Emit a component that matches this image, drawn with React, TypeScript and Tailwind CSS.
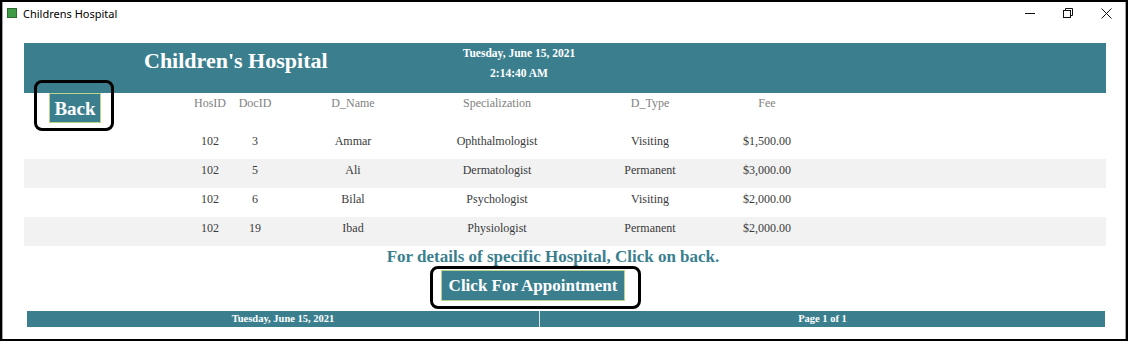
import React from "react";

const rows = [
  ["102", "3", "Ammar", "Ophthalmologist", "Visiting", "$1,500.00"],
  ["102", "5", "Ali", "Dermatologist", "Permanent", "$3,000.00"],
  ["102", "6", "Bilal", "Psychologist", "Visiting", "$2,000.00"],
  ["102", "19", "Ibad", "Physiologist", "Permanent", "$2,000.00"],
];

const widths = ["w-[48px]", "w-[42px]", "w-[154px]", "w-[134px]", "w-[172px]", "w-[62px]"];

export default function App() {
  return (
    <div className="w-[1128px] h-[341px] border-2 border-black bg-white relative overflow-hidden">
      <div className="h-full border-l border-r border-[#a3a3a3] font-['Liberation_Serif',serif]">
        {/* title bar */}
        <div className="h-[22px] flex items-center font-['Noto_Sans',sans-serif]">
          <div className="ml-[4px] w-[10px] h-[10px] bg-[#3f9a45] border border-[#2d6b31]" />
          <span className="ml-[6px] text-[11px] text-black leading-none">Childrens Hospital</span>
          <div className="ml-auto flex items-center h-full">
            <div className="w-[38px] flex justify-center">
              <svg width="10" height="10" viewBox="0 0 10 10"><line x1="0" y1="5.5" x2="10" y2="5.5" stroke="#111" strokeWidth="1" /></svg>
            </div>
            <div className="w-[38px] flex justify-center">
              <svg width="10" height="10" viewBox="0 0 10 10" fill="none" stroke="#111" strokeWidth="1">
                <rect x="0.5" y="2.5" width="7" height="7" />
                <path d="M2.5 2.5V0.5H9.5V7.5H7.5" />
              </svg>
            </div>
            <div className="w-[38px] flex justify-center">
              <svg width="11" height="11" viewBox="0 0 11 11" stroke="#111" strokeWidth="1"><line x1="0.5" y1="0.5" x2="10.5" y2="10.5" /><line x1="10.5" y1="0.5" x2="0.5" y2="10.5" /></svg>
            </div>
          </div>
        </div>

        {/* main */}
        <div className="mt-[19px] ml-[21px] w-[1082px]">
          <div className="h-[50px] bg-[#3b7f8f] flex items-start text-white font-bold pl-[120px]">
            <div className="w-[295px] pt-[5px] text-[22px] leading-[26px]">Children's Hospital</div>
            <div className="w-[160px] text-center text-[11.5px] leading-[20px]">
              <div>Tuesday, June 15, 2021</div>
              <div>2:14:40 AM</div>
            </div>
          </div>

          <div className="h-[37px] flex items-start">
            <div className="w-[162px]">
              <button className="ml-[25px] w-[52px] h-[30px] bg-[#3b7f8f] border border-[#b7d48a] text-white font-bold text-[19px] leading-none">Back</button>
            </div>
            {["HosID", "DocID", "D_Name", "Specialization", "D_Type", "Fee"].map((h, i) => (
              <div key={h} className={`${widths[i]} text-center text-[12px] leading-[16px] pt-[2px] text-[#7f7f7f]`}>{h}</div>
            ))}
          </div>

          {rows.map((r, ri) => (
            <div key={ri} className={`h-[29px] flex items-start pt-[4px] ${ri % 2 === 1 ? "bg-[#f2f2f2]" : "bg-white"}`}>
              <div className="w-[162px]" />
              {r.map((c, i) => (
                <div key={i} className={`${widths[i]} text-center text-[12px] leading-[14px] text-[#3a3a3a]`}>{c}</div>
              ))}
            </div>
          ))}

          <div className="pr-[24px] text-center text-[17px] leading-[20px] font-bold text-[#3b7f8f] pt-[1px]">
            For details of specific Hospital, Click on back.
          </div>
          <div className="flex pl-[417px] mt-[3px]">
            <button className="w-[184px] h-[31px] bg-[#3b7f8f] border border-[#b7d48a] text-white font-bold text-[17px] leading-none">Click For Appointment</button>
          </div>

          <div className="mt-[10px] ml-[3px] w-[1078px] h-[16px] flex bg-[#3b7f8f] text-white font-bold text-[10.5px] leading-[16px]">
            <div className="w-[513px] text-center border-r border-[#d7e6ea]">Tuesday, June 15, 2021</div>
            <div className="flex-1 text-center">Page 1 of 1</div>
          </div>
        </div>
      </div>

      {/* annotation highlight boxes */}
      <div className="absolute left-[32px] top-[78px] w-[80px] h-[51px] border-[3px] border-black rounded-[8px]" />
      <div className="absolute left-[428px] top-[264px] w-[211px] h-[43px] border-[3px] border-black rounded-[8px]" />
    </div>
  );
}
